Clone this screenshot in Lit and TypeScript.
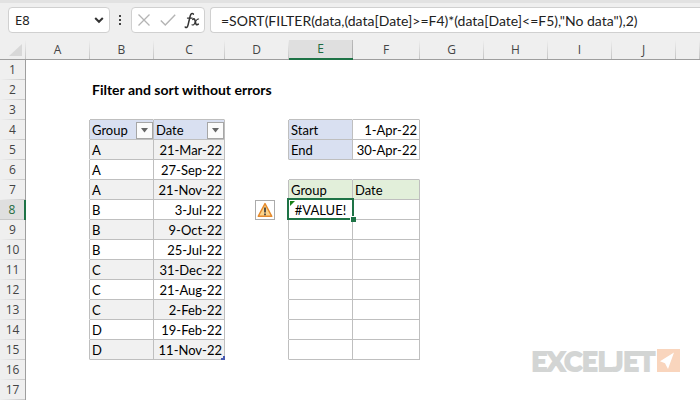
import { LitElement, html, css, svg, nothing } from "lit";
import { customElement } from "lit/decorators.js";
import { classMap } from "lit/directives/class-map.js";

const COLUMNS = ["A", "B", "C", "D", "E", "F", "G", "H", "I", "J", ""];
const ROW_COUNT = 17;

const DATA: [string, string][] = [
  ["A", "21-Mar-22"],
  ["A", "27-Sep-22"],
  ["A", "21-Nov-22"],
  ["B", "3-Jul-22"],
  ["B", "9-Oct-22"],
  ["B", "25-Jul-22"],
  ["C", "31-Dec-22"],
  ["C", "21-Aug-22"],
  ["C", "2-Feb-22"],
  ["D", "19-Feb-22"],
  ["D", "11-Nov-22"],
];

type Cell = { text?: string; kind?: string; filter?: boolean; boxed?: boolean };

function buildCells(): Map<string, Cell> {
  const cells = new Map<string, Cell>();
  cells.set("B2", { text: "Filter and sort without errors", kind: "title" });
  cells.set("B4", { text: "Group", kind: "blue", filter: true, boxed: true });
  cells.set("C4", { text: "Date", kind: "blue", filter: true, boxed: true });
  DATA.forEach(([group, date], i) => {
    const band = i % 2 === 0 ? "band" : "plain";
    cells.set(`B${i + 5}`, { text: group, kind: band, boxed: true });
    cells.set(`C${i + 5}`, { text: date, kind: `${band} right`, boxed: true });
  });
  cells.set("E4", { text: "Start", kind: "blue", boxed: true });
  cells.set("F4", { text: "1-Apr-22", kind: "right", boxed: true });
  cells.set("E5", { text: "End", kind: "blue", boxed: true });
  cells.set("F5", { text: "30-Apr-22", kind: "right", boxed: true });
  cells.set("E7", { text: "Group", kind: "green", boxed: true });
  cells.set("F7", { text: "Date", kind: "green", boxed: true });
  for (let r = 8; r <= 15; r++) {
    cells.set(`E${r}`, { boxed: true });
    cells.set(`F${r}`, { boxed: true });
  }
  cells.set("E8", { text: "#VALUE!", kind: "center", boxed: true });
  return cells;
}

@customElement("formula-bar")
export class FormulaBar extends LitElement {
  static styles = css`
    :host {
      display: flex;
      align-items: center;
      gap: 5px;
      padding: 4px 0 7px 8px;
      border-top: 3px solid #e2e2e2;
      background: #efefef;
    }
    .box {
      display: flex;
      align-items: center;
      box-sizing: border-box;
      height: 26px;
      border: 1px solid #d0d0d0;
      border-radius: 4px;
      background: #fff;
    }
    .name {
      flex: none;
      width: 102px;
    }
    .tools {
      flex: none;
      width: 74px;
    }
    .formula {
      flex: 1;
      min-width: 0;
      border-right: 0;
      border-radius: 4px 0 0 4px;
    }
    input {
      flex: 1;
      min-width: 0;
      width: 100%;
      height: 22px;
      box-sizing: border-box;
      border: 0;
      outline: 0;
      background: none;
      color: #222;
      font: 13px "Noto Sans", "Open Sans", sans-serif;
    }
    .name input {
      padding: 0 0 0 6px;
    }
    .formula input {
      padding: 0 0 0 10px;
      font: 14px Lato, "Open Sans", sans-serif;
    }
    button {
      display: flex;
      align-items: center;
      justify-content: center;
      flex: 1;
      height: 24px;
      padding: 0;
      border: 0;
      background: none;
    }
    .name button {
      flex: none;
      width: 20px;
    }
    .dots {
      flex: none;
      width: 11px;
      height: 12px;
    }
  `;

  render() {
    return html`
      <div class="box name">
        <input aria-label="Name box" .value=${"E8"} />
        <button aria-label="Open name list">
          <svg width="10" height="8" viewBox="0 0 10 8" fill="none" stroke="#333" stroke-width="2">
            <path d="M1.2 2 L5 5.8 L8.8 2" />
          </svg>
        </button>
      </div>
      <svg class="dots" viewBox="0 0 11 12" fill="#444">
        <rect x="4" y="1" width="2" height="2" />
        <rect x="4" y="5" width="2" height="2" />
        <rect x="4" y="9" width="2" height="2" />
      </svg>
      <div class="box tools">
        <button aria-label="Cancel">
          <svg width="14" height="14" viewBox="0 0 14 14" fill="none" stroke="#b4b4b4" stroke-width="1.3">
            <path d="M1.5 1.5 L12.5 12.5 M12.5 1.5 L1.5 12.5" />
          </svg>
        </button>
        <button aria-label="Enter">
          <svg width="16" height="14" viewBox="0 0 16 14" fill="none" stroke="#b4b4b4" stroke-width="1.4">
            <path d="M.8 7.5 L5.3 12 L15.2 1.8" />
          </svg>
        </button>
        <button aria-label="Insert function">
          <svg width="16" height="17" viewBox="0 0 16 17" fill="none" stroke="#333" stroke-linecap="round">
            <path stroke-width="1.5" d="M9.4 2.1 C8.2 .7 6.8 1.6 6.2 4 L4 13.2 C3.5 15.4 2.3 16.2 1.2 15" />
            <path stroke-width="1.1" d="M3.4 6.1 H8.2" />
            <path stroke-width="1.6" d="M8.8 7.3 C10.6 6 11 8 11.3 9.6 C11.7 12 12.4 13.8 14.3 12.2" />
            <path stroke-width="1.1" d="M14.6 7 C12.8 6.4 11.6 9.4 10.8 11 C10.2 12.4 9.2 13.6 8 12.8" />
          </svg>
        </button>
      </div>
      <div class="box formula">
        <input
          aria-label="Formula"
          .value=${'=SORT(FILTER(data,(data[Date]>=F4)*(data[Date]<=F5),"No data"),2)'}
        />
      </div>
    `;
  }
}

@customElement("sheet-grid")
export class SheetGrid extends LitElement {
  static styles = css`
    :host {
      display: block;
      background: #fff;
    }
    table {
      width: 100%;
      table-layout: fixed;
      border-collapse: separate;
      border-spacing: 0;
      font: 13px/18px Lato, "Open Sans", sans-serif;
      color: #000;
    }
    .w-head { width: 26px; }
    .w-std { width: 64px; }
    .w-c { width: 71px; }
    .w-f { width: 67px; }
    th, td {
      position: relative;
      box-sizing: border-box;
      height: 20px;
      border: 0 solid transparent;
      border-width: 0 1px 1px 0;
      text-align: left;
      white-space: nowrap;
    }
    td {
      padding: 1px 2px 0;
      line-height: 18px;
    }
    th {
      padding: 0;
      background: #efefef;
      color: #444;
      font: 12px/19px "Open Sans", sans-serif;
      text-align: center;
    }
    thead th {
      padding-right: 1px;
      border-bottom-color: #9e9e9e;
      border-right: 0;
      background: linear-gradient(#efefef, #c4c4c4) right / 1px 100% no-repeat #efefef;
    }
    tbody th {
      border-right-color: #9e9e9e;
      border-bottom: 0;
      line-height: 20px;
      background: linear-gradient(90deg, #efefef, #c8c8c8) bottom / 100% 1px no-repeat #efefef;
    }
    thead th.active {
      border-bottom: 2px solid #1e7346;
      line-height: 18px;
      background: linear-gradient(#bbb, #aaa) right / 1px 100% no-repeat #dfdfdf;
      color: #1e6b41;
    }
    tbody th.active {
      border-right: 2px solid #1e7346;
      background: linear-gradient(#c8c8c8, #c8c8c8) bottom / 100% 1px no-repeat #dfdfdf;
      color: #1e6b41;
    }
    .all {
      display: block;
      margin-left: 9px;
    }
    .line-r { border-right-color: #bfbfbf; }
    .line-b { border-bottom-color: #bfbfbf; }
    .title {
      font-size: 14px;
      font-weight: 700;
      overflow: visible;
    }
    .blue { background: #d9e0f1; }
    .green { background: #e2efda; }
    .band { background: #f1f1f1; }
    .right { text-align: right; }
    .center { text-align: center; }
    .head {
      display: flex;
      align-items: center;
      justify-content: space-between;
      height: 18px;
      margin-right: -2px;
    }
    .filter {
      display: flex;
      align-items: center;
      justify-content: center;
      box-sizing: border-box;
      width: 17px;
      height: 17px;
      padding: 0;
      border: 1px solid #a6a6a6;
      background: #fbfbfb;
    }
    .selection {
      position: absolute;
      inset: -2px -2px -1px -2px;
      border: 2px solid #1e7346;
      pointer-events: none;
      z-index: 1;
    }
    .handle {
      position: absolute;
      right: -4px;
      bottom: -4px;
      width: 5px;
      height: 5px;
      border: 1px solid #fff;
      border-width: 1px 0 0 1px;
      background: #1e7346;
    }
    .flag {
      position: absolute;
      left: 1px;
      top: 1px;
      width: 5px;
      height: 5px;
      background: #178017;
      clip-path: polygon(0 0, 100% 0, 0 100%);
    }
    .warning {
      position: absolute;
      right: 13px;
      top: 0;
      display: flex;
      align-items: center;
      justify-content: center;
      box-sizing: border-box;
      width: 20px;
      height: 20px;
      padding: 0;
      border: 1px solid #ababab;
      background: #fff;
    }
    .corner {
      position: absolute;
      right: -1px;
      bottom: -1px;
      width: 4px;
      height: 4px;
    }
  `;

  private cells = buildCells();

  private boxed(col: number, row: number) {
    return this.cells.get(`${COLUMNS[col]}${row}`)?.boxed ?? false;
  }

  private renderExtras(key: string) {
    if (key === "E8") {
      return html`<span class="flag"></span>
        <span class="selection"><span class="handle"></span></span>`;
    }
    if (key === "D8") {
      return html`<button class="warning" aria-label="Error options">
        <svg width="16" height="16" viewBox="0 0 16 16">
          <path d="M8 1.6 L14.8 14.3 H1.2 Z" fill="#fbd38a" stroke="#e58a2c" stroke-width="1.4" stroke-linejoin="round" />
          <path d="M7.1 5.4 H8.9 V10.6 H7.1 Z M7.1 11.6 H8.9 V13.2 H7.1 Z" fill="#444" />
        </svg>
      </button>`;
    }
    if (key === "C15") {
      return html`<svg class="corner" viewBox="0 0 4 4" fill="#4558b0">
        <path d="M2 0 H4 V4 H0 V2 H2 Z" />
      </svg>`;
    }
    return nothing;
  }

  private renderCell(col: number, row: number) {
    const key = `${COLUMNS[col]}${row}`;
    const cell = this.cells.get(key) ?? {};
    const self = this.boxed(col, row);
    const classes: Record<string, boolean> = {
      "line-r": self || this.boxed(col + 1, row),
      "line-b": self || this.boxed(col, row + 1),
    };
    (cell.kind ?? "").split(" ").filter(Boolean).forEach((k) => (classes[k] = true));
    const content = cell.filter
      ? html`<div class="head">
          <span>${cell.text}</span>
          <button class="filter" aria-label="Filter ${cell.text}">
            <svg width="9" height="5" viewBox="0 0 9 5" fill="#666">${svg`<path d="M1 0 H8 L4.5 4.5 Z" />`}</svg>
          </button>
        </div>`
      : cell.text ?? nothing;
    return html`<td class=${classMap(classes)}>${content}${this.renderExtras(key)}</td>`;
  }

  render() {
    const rows = Array.from({ length: ROW_COUNT }, (_, i) => i + 1);
    return html`<table>
      <colgroup>
        <col class="w-head" />
        ${COLUMNS.map(
          (c) => html`<col class=${c === "C" ? "w-c" : c === "F" ? "w-f" : c ? "w-std" : ""} />`
        )}
      </colgroup>
      <thead>
        <tr>
          <th aria-label="Select all">
            <svg class="all" width="14" height="12" viewBox="0 0 14 12" fill="#d8d8d8">
              <path d="M13 0 V12 H0 Z" />
            </svg>
          </th>
          ${COLUMNS.map((c) => html`<th scope="col" class=${c === "E" ? "active" : ""}>${c}</th>`)}
        </tr>
      </thead>
      <tbody>
        ${rows.map(
          (r) => html`<tr>
            <th scope="row" class=${r === 8 ? "active" : ""}>${r}</th>
            ${COLUMNS.map((_, c) => this.renderCell(c, r))}
          </tr>`
        )}
      </tbody>
    </table>`;
  }
}

@customElement("app-root")
export class AppRoot extends LitElement {
  static styles = css`
    :host {
      display: block;
      position: relative;
      overflow: hidden;
      background: #fff;
    }
    .logo {
      position: absolute;
      right: 20px;
      bottom: 28px;
      display: flex;
      align-items: center;
      gap: 2px;
      color: #d3d5d4;
      font: 700 27px/23px Lato, sans-serif;
      -webkit-text-stroke: 2px #d3d5d4;
    }
  `;

  render() {
    return html`
      <formula-bar></formula-bar>
      <sheet-grid></sheet-grid>
      <div class="logo">
        <span>EXCELJET</span>
        <svg width="23" height="23" viewBox="0 0 23 23">
          <rect width="23" height="23" fill="#f9d5bd" />
          <path d="M17 3.5 L3 12.2 L8 14.2 L11 20 Z" fill="#fff" />
        </svg>
      </div>
    `;
  }
}
